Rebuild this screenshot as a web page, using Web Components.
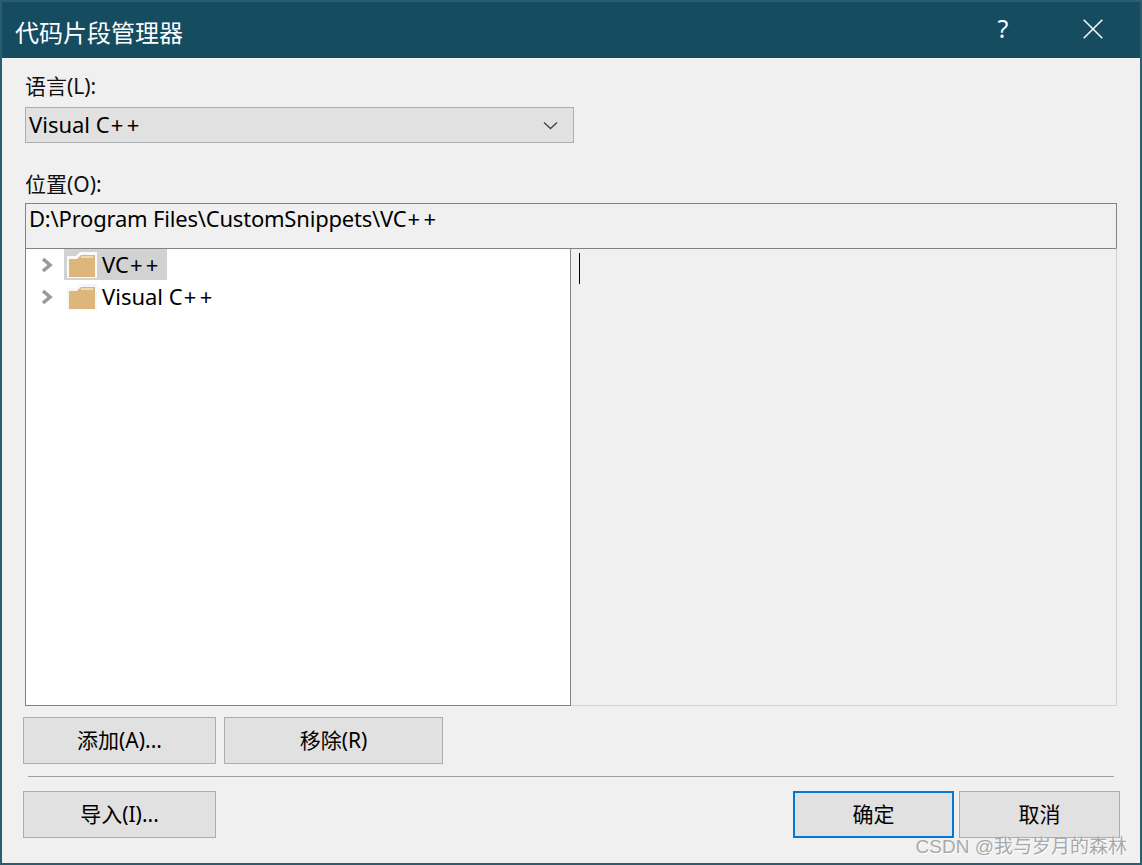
<!DOCTYPE html>
<html lang="zh">
<head>
<meta charset="utf-8">
<title>代码片段管理器</title>
<style>
  html, body { margin: 0; height: 100%; }
  body { font-family: "Noto Sans", "Noto Sans CJK SC", sans-serif; color: #000; }
  .pp { letter-spacing: 3.4px; margin-left: 1px; }
</style>
</head>
<body>

<snippet-dialog>
  <title-bar>代码片段管理器</title-bar>

  <field-label>语言(L):</field-label>
  <combo-box>Visual C<span class="pp">++</span></combo-box>

  <field-label style="margin-top:30px;margin-bottom:8px">位置(O):</field-label>
  <path-field>D:\Program Files\CustomSnippets\VC<span class="pp">++</span></path-field>

  <split-pane>
    <tree-view slot="left">
      <tree-item selected>VC<span class="pp">++</span></tree-item>
      <tree-item>Visual C<span class="pp">++</span></tree-item>
    </tree-view>
    <detail-view slot="right"></detail-view>
  </split-pane>

  <button-row style="margin-top:11px">
    <dlg-button w="193">添加(A)...</dlg-button>
    <dlg-button w="219">移除(R)</dlg-button>
  </button-row>

  <h-rule></h-rule>

  <button-row style="gap:5px">
    <dlg-button w="193">导入(I)...</dlg-button>
    <span style="flex:1"></span>
    <dlg-button w="161" focused>确定</dlg-button>
    <dlg-button w="161">取消</dlg-button>
  </button-row>

  <water-mark>CSDN @我与岁月的森林</water-mark>
</snippet-dialog>

<script>
// helper, every element gets its own open shadow root
function define(name, html, extra) {
    const t = document.createElement('template');
    t.innerHTML = html;
    class El extends HTMLElement {
        constructor() {
            super();
            this.attachShadow({mode: 'open'});
            this.shadowRoot.appendChild(t.content.cloneNode(true));
        }
        connectedCallback() {
            if (extra) extra(this);
        }
    }
    customElements.define(name, El);
}

define('snippet-dialog', `
    <style>
        :host { display: flex; flex-direction: column; position: relative; box-sizing: border-box;
                width: 1142px; height: 865px; overflow: hidden; background: #f0f0f0;
                border: 2px solid #2b5c6f; padding: 0 20px 0 21px; }
    </style>
    <slot></slot>
`);

define('title-bar', `
    <style>
        :host { display: flex; align-items: center; flex: none; height: 56px; margin: 0 -20px 0 -21px;
                background: #154c60; color: #fff; font-size: 24px; padding-left: 13px; }
        .text { flex: 1; position: relative; top: 1px; }
        .help { width: 16px; font-size: 25px; text-align: center; margin: -4px 72px 0 0; }
        svg { display: block; margin-right: 37px; margin-top: -3px; }
    </style>
    <span class="text"><slot></slot></span>
    <span class="help">?</span>
    <svg width="20" height="20" viewBox="0 0 20 20">
        <path d="M.7 .7 L19.3 19.3 M19.3 .7 L.7 19.3" stroke="#f4f4f4" stroke-width="1.6" fill="none"/>
    </svg>
`);

define('field-label', `
    <style>
        :host { display: block; flex: none; height: 22px; line-height: 22px; margin: 17px 0 10px 2px; font-size: 21px; color: #111; }
    </style>
    <slot></slot>
`);

define('combo-box', `
    <style>
        :host { display: flex; align-items: center; flex: none; box-sizing: border-box; width: 549px; height: 36px;
                margin-left: 2px; background: #e1e1e1; border: 1px solid #adadad; font-size: 22px; padding: 0 15px 0 3px; }
        .v { flex: 1; margin-top: -2px; }
        svg { display: block; }
    </style>
    <span class="v"><slot></slot></span>
    <svg width="15" height="9" viewBox="0 0 15 9">
        <path d="M1 1.5 L7.5 7.5 L14 1.5" stroke="#444" stroke-width="1.4" fill="none"/>
    </svg>
`);

define('path-field', `
    <style>
        :host { display: block; flex: none; box-sizing: border-box; width: 1092px; height: 45px; margin-left: 2px;
                border: 1px solid #828282; border-bottom: 0; font-size: 22px; line-height: 28px; padding: 0 3px;
                white-space: nowrap; letter-spacing: -0.2px; }
    </style>
    <slot></slot>
`);

define('split-pane', `
    <style>
        :host { display: flex; flex: none; width: 1092px; height: 458px; margin-left: 2px; }
    </style>
    <slot name="left"></slot>
    <slot name="right"></slot>
`);

define('tree-view', `
    <style>
        :host { display: block; box-sizing: border-box; width: 546px; background: #fff;
                border: 1px solid #828282; }
    </style>
    <slot></slot>
`);

define('tree-item', `
    <style>
        :host { display: flex; align-items: center; height: 31px; margin-bottom: 1px; padding-left: 14px; font-size: 22px; }
        .chev { display: block; margin-right: 10px; }
        .label { display: flex; align-items: center; height: 31px; padding: 0 5px 0 3px; }
        :host([selected]) .label { background: #d2d2d2; }
        .text { margin-top: -1px; }
        .folder { display: block; margin-right: 5px; }
        .edge { fill: #f6f6f6; }
        :host([selected]) .edge { fill: #fafafa; }
    </style>
    <svg class="chev" width="14" height="16" viewBox="0 0 14 16">
        <path d="M3 2 L10 8 L3 14" stroke="#9a9a9a" stroke-width="3.6" fill="none"/>
    </svg>
    <span class="label">
        <svg class="folder" width="30" height="26" viewBox="0 0 30 26">
            <path class="edge" d="M0 4 H9 L13 0 H30 V26 H0 Z"/>
            <path d="M2 7 H10 L14 3 H28 V25 H2 Z" fill="#dcb67a"/>
            <path d="M14 5 H26" stroke="#f2e3c8" stroke-width="1.6"/>
        </svg>
        <span class="text"><slot></slot></span>
    </span>
`);

define('detail-view', `
    <style>
        :host { display: block; position: relative; box-sizing: border-box; flex: 1; border-right: 1px solid #d2d2d2; border-bottom: 1px solid #d2d2d2; border-top: 1px solid #828282; }
        .caret { position: absolute; left: 8px; top: 4px; width: 1px; height: 31px; background: #000; }
    </style>
    <div class="caret"></div>
`);

define('button-row', `
    <style>
        :host { display: flex; flex: none; gap: 8px; }
    </style>
    <slot></slot>
`);

define('dlg-button', `
    <style>
        :host { display: flex; align-items: center; justify-content: center; flex: none; box-sizing: border-box; height: 47px;
                background: #e1e1e1; border: 1px solid #adadad; font-size: 21px; padding-bottom: 3px; }
        :host([focused]) { border: 2px solid #0078d7; }
    </style>
    <slot></slot>
`, (el) => {
    el.style.width = el.getAttribute('w') + 'px';
});

define('h-rule', `
    <style>
        :host { display: block; flex: none; width: 1086px; height: 1px; margin: 12px 0 14px 5px; background: #a0a0a0; }
    </style>
`);

define('water-mark', `
    <style>
        :host { position: absolute; right: 13px; bottom: 4px; font-size: 19px; line-height: 24px; color: #a9a9a9; font-family: "Liberation Sans", "Noto Sans CJK SC", sans-serif;
                text-shadow: 1px 1px 1px #fff; white-space: nowrap; }
    </style>
    <slot></slot>
`);
</script>
</body>
</html>
